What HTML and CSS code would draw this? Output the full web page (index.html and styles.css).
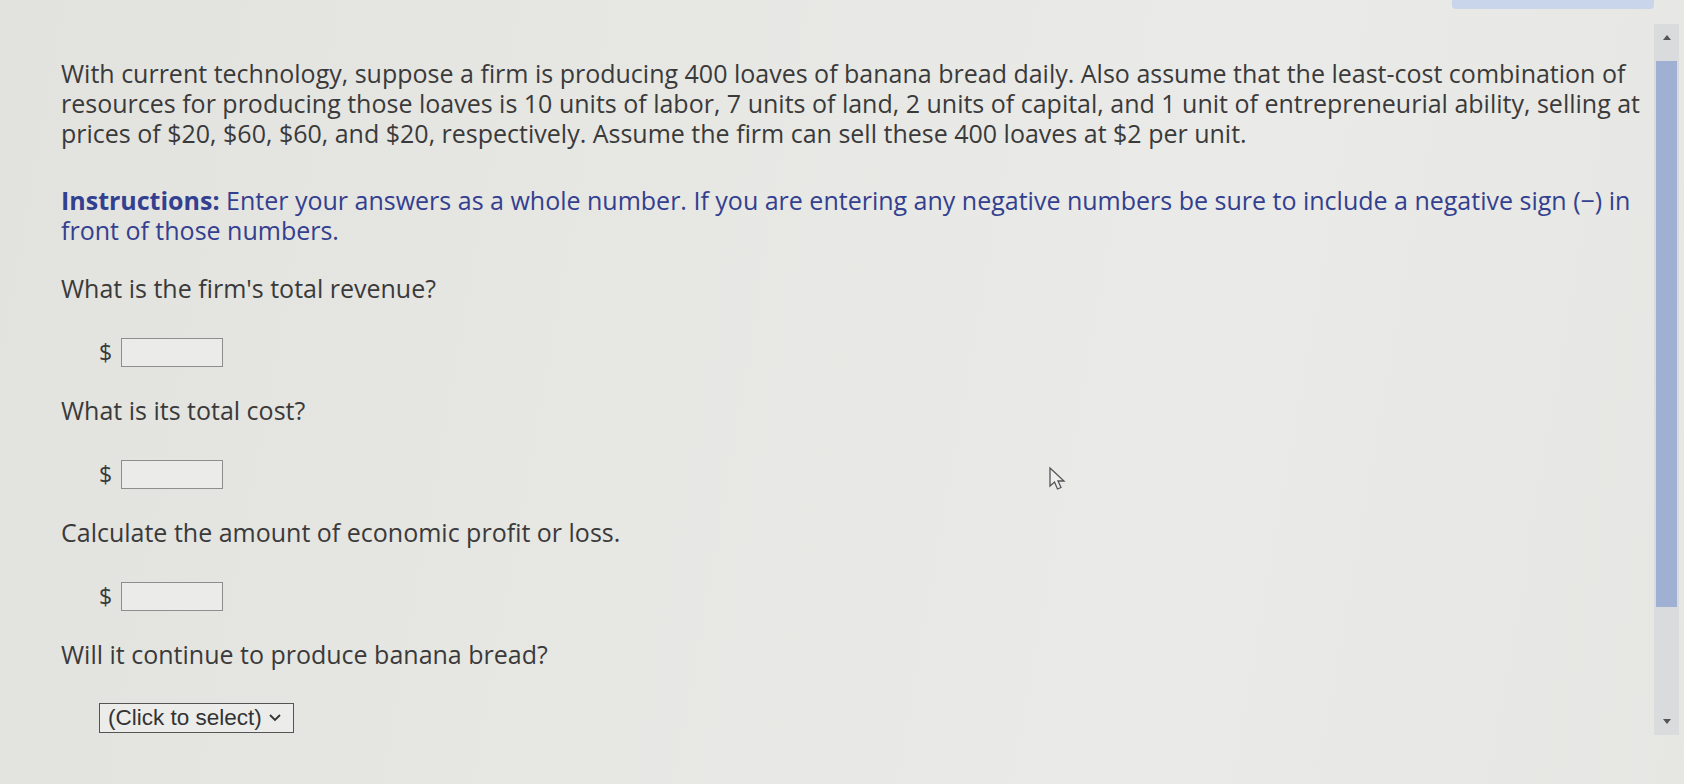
FILE: index.html
```html
<!DOCTYPE html>
<html>
<head>
<meta charset="utf-8">
<link rel="stylesheet" href="styles.css">
</head>
<body>
<div class="topbar"></div>
<div class="page">
  <main class="content">
    <p class="intro">With current technology, suppose a firm is producing 400 loaves of banana bread daily. Also assume that the least-cost combination of resources for producing those loaves is 10 units of labor, 7 units of land, 2 units of capital, and 1 unit of entrepreneurial ability, selling at prices of $20, $60, $60, and $20, respectively. Assume the firm can sell these 400 loaves at $2 per unit.</p>
    <p class="instructions"><strong>Instructions:</strong> Enter your answers as a whole number. If you are entering any negative numbers be sure to include a negative sign (&minus;) in front of those numbers.</p>
    <p class="question">What is the firm's total revenue?</p>
    <div class="answer"><span class="dollar">$</span><span class="box"></span></div>
    <p class="question">What is its total cost?</p>
    <div class="answer"><span class="dollar">$</span><span class="box"></span></div>
    <p class="question">Calculate the amount of economic profit or loss.</p>
    <div class="answer"><span class="dollar">$</span><span class="box"></span></div>
    <p class="question">Will it continue to produce banana bread?</p>
    <div class="select-row">
      <div class="select">(Click to select)
        <svg class="chev" width="14" height="10" viewBox="0 0 14 10"><path d="M2 2 L7 7 L12 2" fill="none" stroke="#333" stroke-width="1.8"/></svg>
      </div>
    </div>
  </main>
  <div class="scrollbar">
    <svg class="arrow" width="10" height="6" viewBox="0 0 10 6"><path d="M1 6 L5 1 L9 6 Z" fill="#555"/></svg>
    <div class="thumb-area"><div class="thumb"></div></div>
    <svg class="arrow" width="10" height="6" viewBox="0 0 10 6"><path d="M1 0 L5 5 L9 0 Z" fill="#555"/></svg>
  </div>
</div>
<svg class="cursor" width="22" height="28" viewBox="0 0 22 28"><path d="M2 2 L2 20 L6.5 16 L9.5 23 L13 21.5 L10 15 L16 15 Z" fill="#eee" stroke="#555" stroke-width="1.3"/></svg>
</body>
</html>
```
FILE: styles.css
```css
html, body {
  margin: 0;
  padding: 0;
  height: 784px;
  overflow: hidden;
}
body {
  background: linear-gradient(100deg, #e2e2df 0%, #e7e7e4 40%, #eaeae8 70%, #e6e6e3 100%);
  font-family: "Open Sans", "Liberation Sans", Arial, sans-serif;
  color: #3a3a3a;
  position: relative;
}
.topbar {
  position: absolute;
  top: 0;
  left: 1452px;
  width: 202px;
  height: 9px;
  background: #c8d5ea;
  border-radius: 0 0 4px 4px;
}
.page {
  display: flex;
  height: 784px;
}
.content {
  flex: 1;
  padding: 58px 2px 0 61px;
  font-size: 25px;
  line-height: 30px;
}
p { margin: 0; }
.instructions {
  margin-top: 37px;
  color: #33408f;
}
.instructions strong { font-weight: 700; }
.question { margin-top: 28px; }
.answer {
  display: flex;
  align-items: center;
  margin-top: 34px;
  padding-left: 38px;
  height: 30px;
}
.dollar {
  width: 22px;
  font-size: 23px;
}
.box {
  width: 100px;
  height: 27px;
  border: 1px solid #8e8e8e;
  background: #ebebe9;
}
.select-row {
  margin-top: 31px;
  padding-left: 38px;
}
.select {
  display: inline-flex;
  align-items: center;
  gap: 6px;
  height: 30px;
  width: 195px;
  box-sizing: border-box;
  padding: 0 4px 0 8px;
  border: 1px solid #555;
  background: #ececea;
  font-family: "Liberation Sans", Arial, sans-serif;
  font-size: 22.5px;
  color: #333;
}
.scrollbar {
  width: 25px;
  margin: 24px 5px 49px 0;
  background: #d9dbdd;
  display: flex;
  flex-direction: column;
  align-items: center;
}
.arrow { margin: 10px 0; }
.thumb-area {
  flex: 1;
  width: 100%;
  display: flex;
  flex-direction: column;
  padding-top: 11px;
}
.thumb {
  height: 546px;
  margin: 0 2px;
  background: #9fb0d3;
}
.cursor {
  position: absolute;
  left: 1048px;
  top: 466px;
}
```
